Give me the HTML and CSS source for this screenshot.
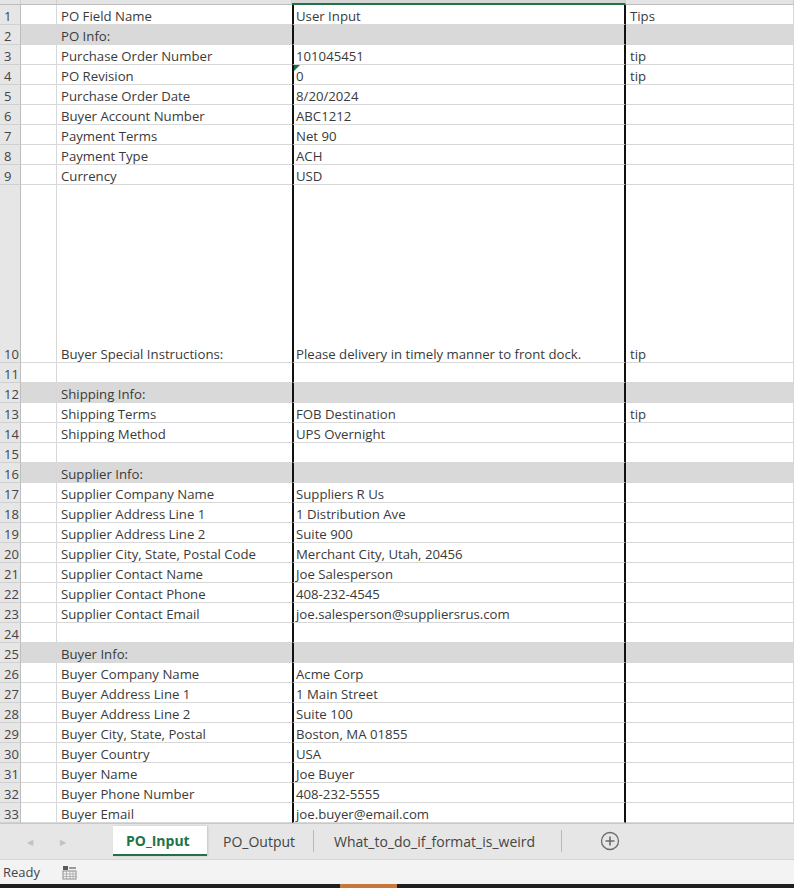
FILE: index.html
```html
<!DOCTYPE html>
<html lang="en">
<head>
    <meta charset="UTF-8">
    <title>PO_Input</title>
    <link rel="stylesheet" href="styles.css">
</head>
<body>
    <div class="workbook">
        <!-- Column header strip (scrolled, only the bottom edge shows) -->
        <div class="row col-heads">
            <div class="head"></div>
            <div class="head"></div>
            <div class="head"></div>
            <div class="head selected"></div>
            <div class="head"></div>
        </div>

        <div class="grid">
            <div class="row"><div class="num">1</div><div class="cell"></div><div class="cell field">PO Field Name</div><div class="cell input">User Input</div><div class="cell">Tips</div></div>
            <div class="row section"><div class="num">2</div><div class="cell"></div><div class="cell field">PO Info:</div><div class="cell input"></div><div class="cell"></div></div>
            <div class="row"><div class="num">3</div><div class="cell"></div><div class="cell field">Purchase Order Number</div><div class="cell input">101045451</div><div class="cell">tip</div></div>
            <div class="row"><div class="num">4</div><div class="cell"></div><div class="cell field">PO Revision</div><div class="cell input flagged">0</div><div class="cell">tip</div></div>
            <div class="row"><div class="num">5</div><div class="cell"></div><div class="cell field">Purchase Order Date</div><div class="cell input">8/20/2024</div><div class="cell"></div></div>
            <div class="row"><div class="num">6</div><div class="cell"></div><div class="cell field">Buyer Account Number</div><div class="cell input">ABC1212</div><div class="cell"></div></div>
            <div class="row"><div class="num">7</div><div class="cell"></div><div class="cell field">Payment Terms</div><div class="cell input">Net 90</div><div class="cell"></div></div>
            <div class="row"><div class="num">8</div><div class="cell"></div><div class="cell field">Payment Type</div><div class="cell input">ACH</div><div class="cell"></div></div>
            <div class="row"><div class="num">9</div><div class="cell"></div><div class="cell field">Currency</div><div class="cell input">USD</div><div class="cell"></div></div>
            <div class="row tall"><div class="num">10</div><div class="cell"></div><div class="cell field">Buyer Special Instructions:</div><div class="cell input">Please delivery in timely manner to front dock.</div><div class="cell">tip</div></div>
            <div class="row"><div class="num">11</div><div class="cell"></div><div class="cell field"></div><div class="cell input"></div><div class="cell"></div></div>
            <div class="row section"><div class="num">12</div><div class="cell"></div><div class="cell field">Shipping Info:</div><div class="cell input"></div><div class="cell"></div></div>
            <div class="row"><div class="num">13</div><div class="cell"></div><div class="cell field">Shipping Terms</div><div class="cell input">FOB Destination</div><div class="cell">tip</div></div>
            <div class="row"><div class="num">14</div><div class="cell"></div><div class="cell field">Shipping Method</div><div class="cell input">UPS Overnight</div><div class="cell"></div></div>
            <div class="row"><div class="num">15</div><div class="cell"></div><div class="cell field"></div><div class="cell input"></div><div class="cell"></div></div>
            <div class="row section"><div class="num">16</div><div class="cell"></div><div class="cell field">Supplier Info:</div><div class="cell input"></div><div class="cell"></div></div>
            <div class="row"><div class="num">17</div><div class="cell"></div><div class="cell field">Supplier Company Name</div><div class="cell input">Suppliers R Us</div><div class="cell"></div></div>
            <div class="row"><div class="num">18</div><div class="cell"></div><div class="cell field">Supplier Address Line 1</div><div class="cell input">1 Distribution Ave</div><div class="cell"></div></div>
            <div class="row"><div class="num">19</div><div class="cell"></div><div class="cell field">Supplier Address Line 2</div><div class="cell input">Suite 900</div><div class="cell"></div></div>
            <div class="row"><div class="num">20</div><div class="cell"></div><div class="cell field">Supplier City, State, Postal Code</div><div class="cell input">Merchant City, Utah, 20456</div><div class="cell"></div></div>
            <div class="row"><div class="num">21</div><div class="cell"></div><div class="cell field">Supplier Contact Name</div><div class="cell input">Joe Salesperson</div><div class="cell"></div></div>
            <div class="row"><div class="num">22</div><div class="cell"></div><div class="cell field">Supplier Contact Phone</div><div class="cell input">408-232-4545</div><div class="cell"></div></div>
            <div class="row"><div class="num">23</div><div class="cell"></div><div class="cell field">Supplier Contact Email</div><div class="cell input">joe.salesperson@suppliersrus.com</div><div class="cell"></div></div>
            <div class="row"><div class="num">24</div><div class="cell"></div><div class="cell field"></div><div class="cell input"></div><div class="cell"></div></div>
            <div class="row section"><div class="num">25</div><div class="cell"></div><div class="cell field">Buyer Info:</div><div class="cell input"></div><div class="cell"></div></div>
            <div class="row"><div class="num">26</div><div class="cell"></div><div class="cell field">Buyer Company Name</div><div class="cell input">Acme Corp</div><div class="cell"></div></div>
            <div class="row"><div class="num">27</div><div class="cell"></div><div class="cell field">Buyer Address Line 1</div><div class="cell input">1 Main Street</div><div class="cell"></div></div>
            <div class="row"><div class="num">28</div><div class="cell"></div><div class="cell field">Buyer Address Line 2</div><div class="cell input">Suite 100</div><div class="cell"></div></div>
            <div class="row"><div class="num">29</div><div class="cell"></div><div class="cell field">Buyer City, State, Postal</div><div class="cell input">Boston, MA 01855</div><div class="cell"></div></div>
            <div class="row"><div class="num">30</div><div class="cell"></div><div class="cell field">Buyer Country</div><div class="cell input">USA</div><div class="cell"></div></div>
            <div class="row"><div class="num">31</div><div class="cell"></div><div class="cell field">Buyer Name</div><div class="cell input">Joe Buyer</div><div class="cell"></div></div>
            <div class="row"><div class="num">32</div><div class="cell"></div><div class="cell field">Buyer Phone Number</div><div class="cell input">408-232-5555</div><div class="cell"></div></div>
            <div class="row"><div class="num">33</div><div class="cell"></div><div class="cell field">Buyer Email</div><div class="cell input">joe.buyer@email.com</div><div class="cell"></div></div>
        </div>

        <!-- Sheet tabs -->
        <div class="tab-bar">
            <div class="tab-nav">
                <span class="nav-arrow">&#9664;</span>
                <span class="nav-arrow">&#9654;</span>
            </div>
            <div class="tab active">PO_Input</div>
            <div class="tab">PO_Output</div>
            <div class="tab-sep"></div>
            <div class="tab wide">What_to_do_if_format_is_weird</div>
            <div class="tab-sep"></div>
            <div class="add-sheet">
                <svg width="20" height="20" viewBox="0 0 20 20">
                    <circle cx="10" cy="10" r="8.5" fill="none" stroke="#6b6b6b" stroke-width="1.3"/>
                    <path d="M10 5.5v9M5.5 10h9" stroke="#6b6b6b" stroke-width="1.6"/>
                </svg>
            </div>
        </div>

        <!-- Status bar -->
        <div class="status-bar">
            <span class="status-text">Ready</span>
            <svg class="status-icon" width="15" height="15" viewBox="0 0 15 15">
                <rect x="1" y="1" width="5" height="4" fill="#5a5a5a"/>
                <rect x="7" y="2" width="7" height="2" fill="#9a9a9a"/>
                <rect x="1" y="6" width="13" height="8" fill="none" stroke="#8a8a8a" stroke-width="1"/>
                <path d="M1 9h13M1 11.5h13M4.5 6v8M8 6v8M11 6v8" stroke="#a5a5a5" stroke-width="0.8"/>
            </svg>
        </div>
        <div class="taskbar">
            <div class="taskbar-app"></div>
        </div>
    </div>
</body>
</html>
```

FILE: styles.css
```css
* {
    box-sizing: border-box;
}

body {
    margin: 0;
    font-family: "Open Sans", "Noto Sans", Arial, sans-serif;
    color: #3a3a3a;
    background: #ffffff;
    overflow: hidden;
}

.workbook {
    width: 794px;
    height: 888px;
    display: flex;
    flex-direction: column;
}

.row {
    display: grid;
    grid-template-columns: 21px 36px 235px 334px 1fr;
    height: 20px;
}

.col-heads {
    height: 5px;
}

.head {
    background: #e4e4e4;
    border-right: 1px solid #cfcfcf;
    border-bottom: 1px solid #bdbdbd;
}

.head.selected {
    background: #d6d6d6;
    border-bottom: 2px solid #217346;
}

.grid {
    flex: 1;
    overflow: hidden;
}

.num {
    background: #e6e6e6;
    border-right: 1px solid #bdbdbd;
    border-bottom: 1px solid #d0d0d0;
    color: #444;
    font-size: 13px;
    line-height: 16px;
    padding-left: 4px;
    display: flex;
    align-items: flex-end;
}

.cell {
    position: relative;
    border-right: 1px solid #d8d8d8;
    border-bottom: 1px solid #d8d8d8;
    font-size: 13.2px;
    line-height: 16px;
    padding: 0 4px;
    white-space: nowrap;
    overflow: hidden;
    display: flex;
    align-items: flex-end;
}

.cell.field {
    border-right: none;
}

.cell.input {
    border-left: 2px solid #111;
    border-right: 2px solid #111;
    padding-left: 2px;
}

/* error indicator in the corner of a cell */
.cell.flagged::before {
    content: "";
    position: absolute;
    top: 0;
    left: 0;
    border-top: 6px solid #1e7145;
    border-right: 6px solid transparent;
}

.row.tall {
    height: 178px;
}

.row.section .cell {
    background: #d9d9d9;
}

.tab-bar {
    height: 36px;
    background: #e6e6e6;
    border-top: 1px solid #c8c8c8;
    display: flex;
    align-items: flex-start;
    font-size: 14px;
    color: #444;
}

.tab-nav {
    width: 113px;
    height: 34px;
    display: flex;
    align-items: center;
    gap: 27px;
    padding-left: 27px;
}

.nav-arrow {
    font-size: 8px;
    color: #c2c2c2;
}

.tab {
    height: 34px;
    padding: 0 16px;
    display: flex;
    align-items: center;
    white-space: nowrap;
}

.tab.wide {
    padding-right: 24px;
}

.tab.active {
    margin-top: 2px;
    height: 30px;
    width: 94px;
    padding: 0 0 0 13px;
    background: #ffffff;
    border-bottom: 2px solid #217346;
    color: #217346;
    font-weight: bold;
    box-shadow: 1px 0 2px rgba(0, 0, 0, 0.15);
}

.tab-sep {
    width: 1px;
    height: 22px;
    margin: 6px 4px 0 2px;
    background: #b9b9b9;
}

.add-sheet {
    height: 34px;
    padding-left: 34px;
    display: flex;
    align-items: center;
}

.status-bar {
    height: 25px;
    background: #f3f3f3;
    border-top: 1px solid #d6d6d6;
    display: flex;
    align-items: center;
    padding-left: 3px;
    font-size: 13px;
    color: #444;
}

.status-icon {
    margin-left: 22px;
}

.taskbar {
    height: 4px;
    background: #1f1f1f;
}

.taskbar-app {
    margin-left: 340px;
    width: 57px;
    height: 4px;
    background: #c8773a;
}
```
